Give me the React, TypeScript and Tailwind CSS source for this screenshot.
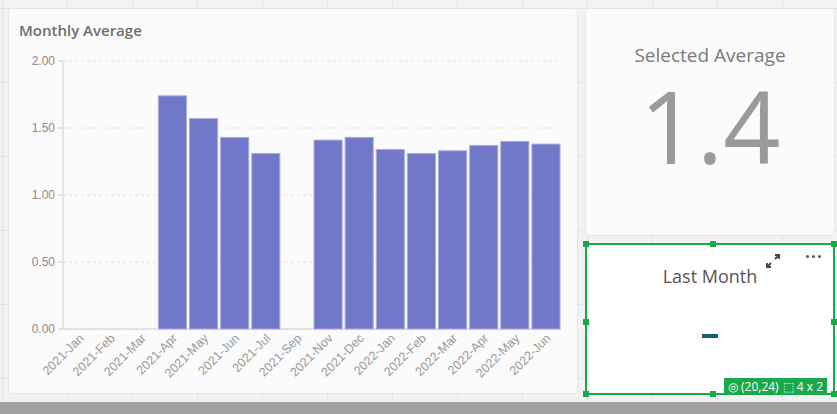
const months = ["2021-Jan","2021-Feb","2021-Mar","2021-Apr","2021-May","2021-Jun","2021-Jul","2021-Sep","2021-Nov","2021-Dec","2022-Jan","2022-Feb","2022-Mar","2022-Apr","2022-May","2022-Jun"];
const vals = [0,0,0,1.74,1.57,1.43,1.31,0,1.41,1.43,1.34,1.31,1.33,1.37,1.40,1.38];

function Chart() {
  const x0 = 54, y0 = 320, yTop = 52, w = 498;
  const slot = w / 16;
  const sc = (y0 - yTop) / 2;
  return (
    <svg width="570" height="386" className="absolute left-0 top-0" style={{ fontFamily: "Arial, 'Liberation Sans', sans-serif" }}>
      {[0, 0.5, 1, 1.5, 2].map((t) => {
        const y = y0 - t * sc;
        return (
          <g key={t}>
            <line x1={x0} x2={x0 + w} y1={y} y2={y} stroke="#e0e0e0" strokeDasharray="3 3" />
            <line x1={x0 - 5} x2={x0} y1={y} y2={y} stroke="#ccc" />
            <text x={x0 - 8} y={y + 4} textAnchor="end" fontSize="12" fill="#8a8a8a">{t.toFixed(2)}</text>
          </g>
        );
      })}
      <line x1={x0} x2={x0} y1={yTop} y2={y0} stroke="#d0d0d0" />
      <line x1={x0} x2={x0 + w} y1={y0} y2={y0} stroke="#cfcfcf" />
      {vals.map((v, i) =>
        v > 0 ? (
          <rect key={i} x={x0 + i * slot + 2} y={y0 - v * sc} width={slot - 3} height={v * sc} fill="#7178c9" stroke="#a9addf" strokeWidth="1" />
        ) : null
      )}
      {months.map((m, i) => {
        const cx = x0 + i * slot + slot / 2 + 6;
        return (
          <text key={m} x={cx} y={y0 + 10} textAnchor="end" fontSize="12.5" fill="#999" transform={`rotate(-45 ${cx} ${y0 + 10})`}>{m}</text>
        );
      })}
    </svg>
  );
}

export default function App() {
  return (
    <div className="relative w-[837px] h-[414px] overflow-hidden bg-[#f2f2f2] bg-[linear-gradient(to_right,#e4e4e4_1px,transparent_1px),linear-gradient(to_bottom,#e4e4e4_1px,transparent_1px)] bg-[size:65px_74px] bg-[position:2px_8px]" style={{ fontFamily: "'Source Sans Pro', 'Open Sans', sans-serif" }}>
      <div className="flex gap-[7px] px-[8px] pt-[8px]">
        <div className="relative w-[570px] h-[386px] shrink-0 bg-[#fbfbfb] rounded-[4px] border border-[#e6e6e6]">
          <div className="absolute left-[10px] top-[10px] text-[15px] font-semibold text-[#6e6e6e]">Monthly Average</div>
          <Chart />
        </div>
        <div className="flex flex-col gap-[7px] w-[250px] shrink-0">
          <div className="h-[228px] bg-[#fbfbfb] rounded-[4px] border border-[#e6e6e6] flex flex-col items-center">
            <div className="mt-[34px] text-[19px] leading-[24px] text-[#7a7a7a]">Selected Average</div>
            <div className="mt-[10px] text-[100px] leading-[96px] text-[#9a9a9a]">1.4</div>
          </div>
          <div className="relative h-[152px] bg-white border-2 border-[#19a94b] flex flex-col items-center">
            <div className="mt-[18px] text-[18px] text-[#555]">Last Month</div>
            <div className="mt-[44px] w-[16px] h-[4px] bg-[#12617a]" />
            <svg className="absolute right-[52px] top-[8px]" width="16" height="16" viewBox="0 0 16 16">
              <path d="M10 2h4v4M14 2l-4 4M6 14H2v-4M2 14l4-4" stroke="#444" strokeWidth="1.8" fill="none" />
            </svg>
            <div className="absolute right-[12px] top-[10px] flex gap-[3px]">
              <span className="w-[3px] h-[3px] rounded-full bg-[#555]" />
              <span className="w-[3px] h-[3px] rounded-full bg-[#555]" />
              <span className="w-[3px] h-[3px] rounded-full bg-[#555]" />
            </div>
            {[["-left-[4px] -top-[4px]"],["left-1/2 -top-[4px]"],["-right-[4px] -top-[4px]"],["-left-[4px] top-1/2"],["-right-[4px] top-1/2"],["-left-[4px] -bottom-[4px]"],["left-1/2 -bottom-[4px]"],["-right-[4px] -bottom-[4px]"]].map(([c]) => (
              <span key={c} className={`absolute w-[6px] h-[6px] bg-[#19a94b] ${c}`} />
            ))}
            <div className="absolute right-[6px] -bottom-[2px] h-[17px] bg-[#19a94b] text-white text-[12px] px-[4px] flex items-center gap-[4px]">
              <span>◎ (20,24)</span><span>⬚ 4 x 2</span>
            </div>
          </div>
        </div>
      </div>
      <div className="absolute left-0 right-0 bottom-0 h-[12px] bg-[#a0a1a0]" />
    </div>
  );
}
